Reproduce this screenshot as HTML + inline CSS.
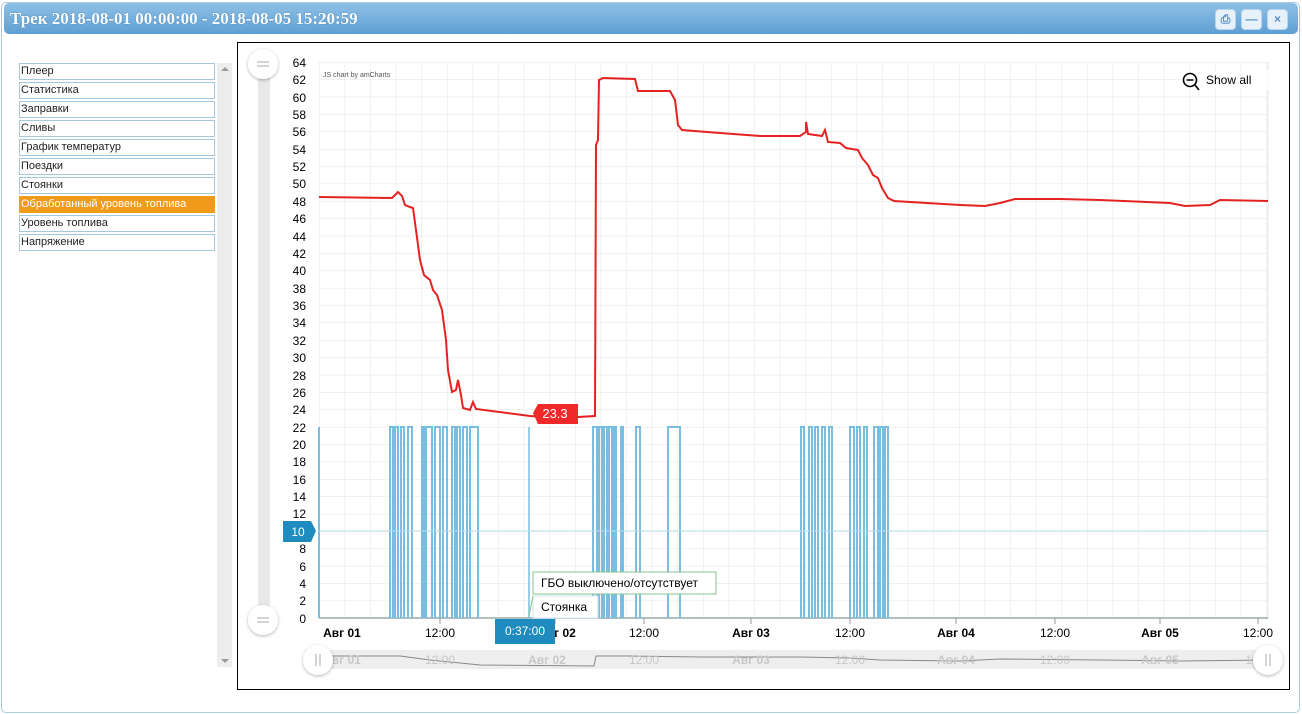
<!DOCTYPE html>
<html><head><meta charset="utf-8"><style>
*{margin:0;padding:0;box-sizing:border-box}
body{width:1302px;height:714px;background:#fff;font-family:"Liberation Sans",Tahoma,sans-serif;position:relative;overflow:hidden}
.win{position:absolute;left:1px;top:2px;width:1299px;height:711px;border:1px solid #a9cbe0;border-radius:5px;background:#fff}
.title{position:absolute;left:4px;top:3px;width:1294px;height:31px;border-radius:5px;background:linear-gradient(#8ec0e6,#5f9fd3);color:#fff;font:bold 17px "Liberation Serif",serif;line-height:31px;padding-left:6px;text-shadow:0 0 1px #2b6a9e}
.btn{position:absolute;top:9px;width:21px;height:21px;border-radius:4px;background:#e7f1fa;border:1px solid #b9d5ee;color:#5a8fc5;font:bold 12px sans-serif;text-align:center;line-height:19px}
.list{position:absolute;left:19px;top:63px;width:196px}
.list div{height:17px;border:1px solid #a7c7dd;margin-bottom:2px;font-size:11px;line-height:15px;padding-left:1px;color:#222;font-family:"Liberation Sans","DejaVu Sans",sans-serif}
.list div.sel{background:#f29a1a;color:#fff;border-color:#f29a1a}
.track{position:absolute;left:217px;top:63px;width:15px;height:604px;background:#ededed}
.chart{position:absolute;left:237px;top:42px;width:1053px;height:648px;border:1px solid #000;background:#fff}
</style></head><body>
<div class="win"></div>
<div class="title">Трек 2018-08-01 00:00:00 - 2018-08-05 15:20:59</div>
<div class="btn" style="left:1215px">&#9113;</div>
<div class="btn" style="left:1241px">&#8212;</div>
<div class="btn" style="left:1267px">×</div>
<div class="list">
<div>Плеер</div><div>Статистика</div><div>Заправки</div><div>Сливы</div><div>График температур</div><div>Поездки</div><div>Стоянки</div><div class="sel">Обработанный уровень топлива</div><div>Уровень топлива</div><div>Напряжение</div>
</div>
<div class="track"><div style="position:absolute;left:4px;top:4px;border:4px solid transparent;border-bottom:4px solid #999;border-top:0"></div><div style="position:absolute;left:4px;bottom:4px;border:4px solid transparent;border-top:4px solid #999;border-bottom:0"></div></div>
<div class="chart"></div>
<svg width="1302" height="714" style="position:absolute;left:0;top:0" font-family="Liberation Sans, Verdana, sans-serif">
<defs>
<pattern id="g" x="319" y="62" width="25.6" height="17.375" patternUnits="userSpaceOnUse">
<path d="M0,0H25.6M0,0V17.375" stroke="#e3e3e3" stroke-width="1" fill="none"/>
</pattern>
<filter id="sh"><feDropShadow dx="0" dy="1" stdDeviation="1.5" flood-opacity="0.3"/></filter>
</defs>
<rect x="319" y="62" width="949" height="556" fill="url(#g)"/>
<line x1="1268" y1="62" x2="1268" y2="618" stroke="#e3e3e3"/>
<line x1="319" y1="618" x2="1268" y2="618" stroke="#9aa" stroke-width="1.5"/>
<g stroke="#999"><line x1="440" y1="618" x2="440" y2="624"/><line x1="644" y1="618" x2="644" y2="624"/><line x1="850" y1="618" x2="850" y2="624"/><line x1="1055" y1="618" x2="1055" y2="624"/><line x1="1258" y1="618" x2="1258" y2="624"/><line x1="555" y1="618" x2="555" y2="624"/><line x1="751" y1="618" x2="751" y2="624"/><line x1="956" y1="618" x2="956" y2="624"/><line x1="1160" y1="618" x2="1160" y2="624"/></g>
<text x="323" y="77" font-size="7" fill="#555">JS chart by amCharts</text>
<g font-size="12" fill="#000" text-anchor="end">
<text x="306" y="67">64</text><text x="306" y="84">62</text><text x="306" y="102">60</text><text x="306" y="119">58</text><text x="306" y="136">56</text><text x="306" y="154">54</text><text x="306" y="171">52</text><text x="306" y="188">50</text><text x="306" y="206">48</text><text x="306" y="223">46</text><text x="306" y="241">44</text><text x="306" y="258">42</text><text x="306" y="275">40</text><text x="306" y="293">38</text><text x="306" y="310">36</text><text x="306" y="327">34</text><text x="306" y="345">32</text><text x="306" y="362">30</text><text x="306" y="380">28</text><text x="306" y="397">26</text><text x="306" y="414">24</text><text x="306" y="432">22</text><text x="306" y="449">20</text><text x="306" y="466">18</text><text x="306" y="484">16</text><text x="306" y="501">14</text><text x="306" y="518">12</text><text x="306" y="553">8</text><text x="306" y="571">6</text><text x="306" y="588">4</text><text x="306" y="605">2</text><text x="306" y="623">0</text>
</g>
<g font-size="12" text-anchor="middle">
<text x="342" y="637" font-weight="bold">Авг 01</text><text x="440" y="637">12:00</text><text x="557" y="637" font-weight="bold">Авг 02</text><text x="644" y="637">12:00</text><text x="751" y="637" font-weight="bold">Авг 03</text><text x="850" y="637">12:00</text><text x="956" y="637" font-weight="bold">Авг 04</text><text x="1055" y="637">12:00</text><text x="1160" y="637" font-weight="bold">Авг 05</text><text x="1258" y="637">12:00</text>
</g>
<g fill="none" stroke="#79bde0" stroke-width="2">
<path d="M319,618V427"/>
<path d="M390,618V427H393V618M395,618V427H398V618M401,618V427H404V618M408,618V427H412V618M422,618V427H424V618M426,618V427H432V618M435,618V427H440V618M443,618V427H447V618M452,618V427H455V618M457,618V427H460V618M463,618V427H467V618M470,618V427H478V618"/>
<path d="M529,618V427" stroke-width="1.5"/>
<path d="M593,618V427H597V618M599,618V427H602V618M604,618V427H607V618M609,618V427H612V618M614,618V427H616V618M621,618V427H623V618M636,618V427H640V618M668,618V427H680V618"/>
<path d="M801,618V427H804V618M809,618V427H812V618M815,618V427H818V618M822,618V427H825V618M829,618V427H832V618M850,618V427H854V618M857,618V427H860V618M864,618V427H867V618M874,618V427H878V618M880,618V427H883V618M885,618V427H888V618"/>
</g>
<line x1="319" y1="531" x2="1268" y2="531" stroke="#b9dbe9"/>
<polyline fill="none" stroke="#e52222" stroke-width="2" points="319,197 392,198 398,192 402,196 405,205 410,207 413,208 416,230 420,260 424,275 430,280 433,290 437,295 442,310 446,340 448,370 452,392 456,390 458,380 461,395 463,408 470,410 473,402 476,409 530,416 560,418 595,416 596,145 598,140 599,80 603,78 635,79 638,91 670,91 675,100 678,125 682,130 720,133 760,136 800,136 806,132 806,122 808,134 822,136 825,130 828,142 840,143 846,148 858,150 862,158 868,165 873,175 878,178 882,188 888,198 894,201 960,205 985,206 1000,203 1015,199 1060,199 1100,200 1170,203 1185,206 1210,205 1220,200 1268,201"/>
<path d="M533,413L538,404H578V424H538Z" fill="#f02a2a"/>
<text x="555" y="418" font-size="13" fill="#fff" text-anchor="middle">23.3</text>
<path d="M283,521H311L316,531L311,542H283Z" fill="#1f8bbf"/>
<text x="298" y="536" font-size="12" fill="#fff" text-anchor="middle">10</text>
<rect x="533" y="572" width="183" height="22" fill="#fff" stroke="#8bc38b"/>
<text x="541" y="587" font-size="12">ГБО выключено/отсутствует</text>
<rect x="533" y="596" width="65" height="22" fill="#fff" stroke="#cce3ef"/>
<text x="541" y="611" font-size="12">Стоянка</text>
<path d="M529,616L533,596" stroke="#8bc38b" fill="none"/>
<rect x="495" y="619" width="60" height="25" fill="#1f8bbf"/>
<text x="525" y="635" font-size="12" fill="#fff" text-anchor="middle">0:37:00</text>
<rect x="1182" y="70" width="90" height="20" fill="#fff" opacity="0.8"/>
<circle cx="1190" cy="80" r="6.5" fill="none" stroke="#000" stroke-width="1.6"/><path d="M1186.5,80H1193.5M1195,85L1199,90" stroke="#000" stroke-width="1.6"/>
<text x="1206" y="84" font-size="12">Show all</text>
<rect x="258" y="64" width="12" height="556" fill="#e8e8e8"/>
<rect x="305" y="650" width="975" height="19" fill="#eee"/>
<polyline fill="none" stroke="#888" points="318,656 400,656 430,660 480,665 594,666 596,656 630,656 700,657 800,657 850,658 880,660 960,661 1000,659 1100,660 1180,661 1268,660"/>
<g font-size="12" fill="#c8c8c8" text-anchor="middle"><text x="342" y="664" font-weight="bold">Авг 01</text><text x="440" y="664">12:00</text><text x="547" y="664" font-weight="bold">Авг 02</text><text x="644" y="664">12:00</text><text x="751" y="664" font-weight="bold">Авг 03</text><text x="850" y="664">12:00</text><text x="956" y="664" font-weight="bold">Авг 04</text><text x="1055" y="664">12:00</text><text x="1160" y="664" font-weight="bold">Авг 05</text><text x="1252" y="664">12</text></g>
<g fill="#fff" filter="url(#sh)"><circle cx="263" cy="64" r="15"/><circle cx="263" cy="620" r="15"/><circle cx="318" cy="660" r="15"/><circle cx="1268" cy="660" r="15"/></g>
<g stroke="#aaa"><path d="M257,62H269M257,66H269M257,618H269M257,622H269M316,654V666M320,654V666M1266,654V666M1270,654V666"/></g>
</svg>
</body></html>
